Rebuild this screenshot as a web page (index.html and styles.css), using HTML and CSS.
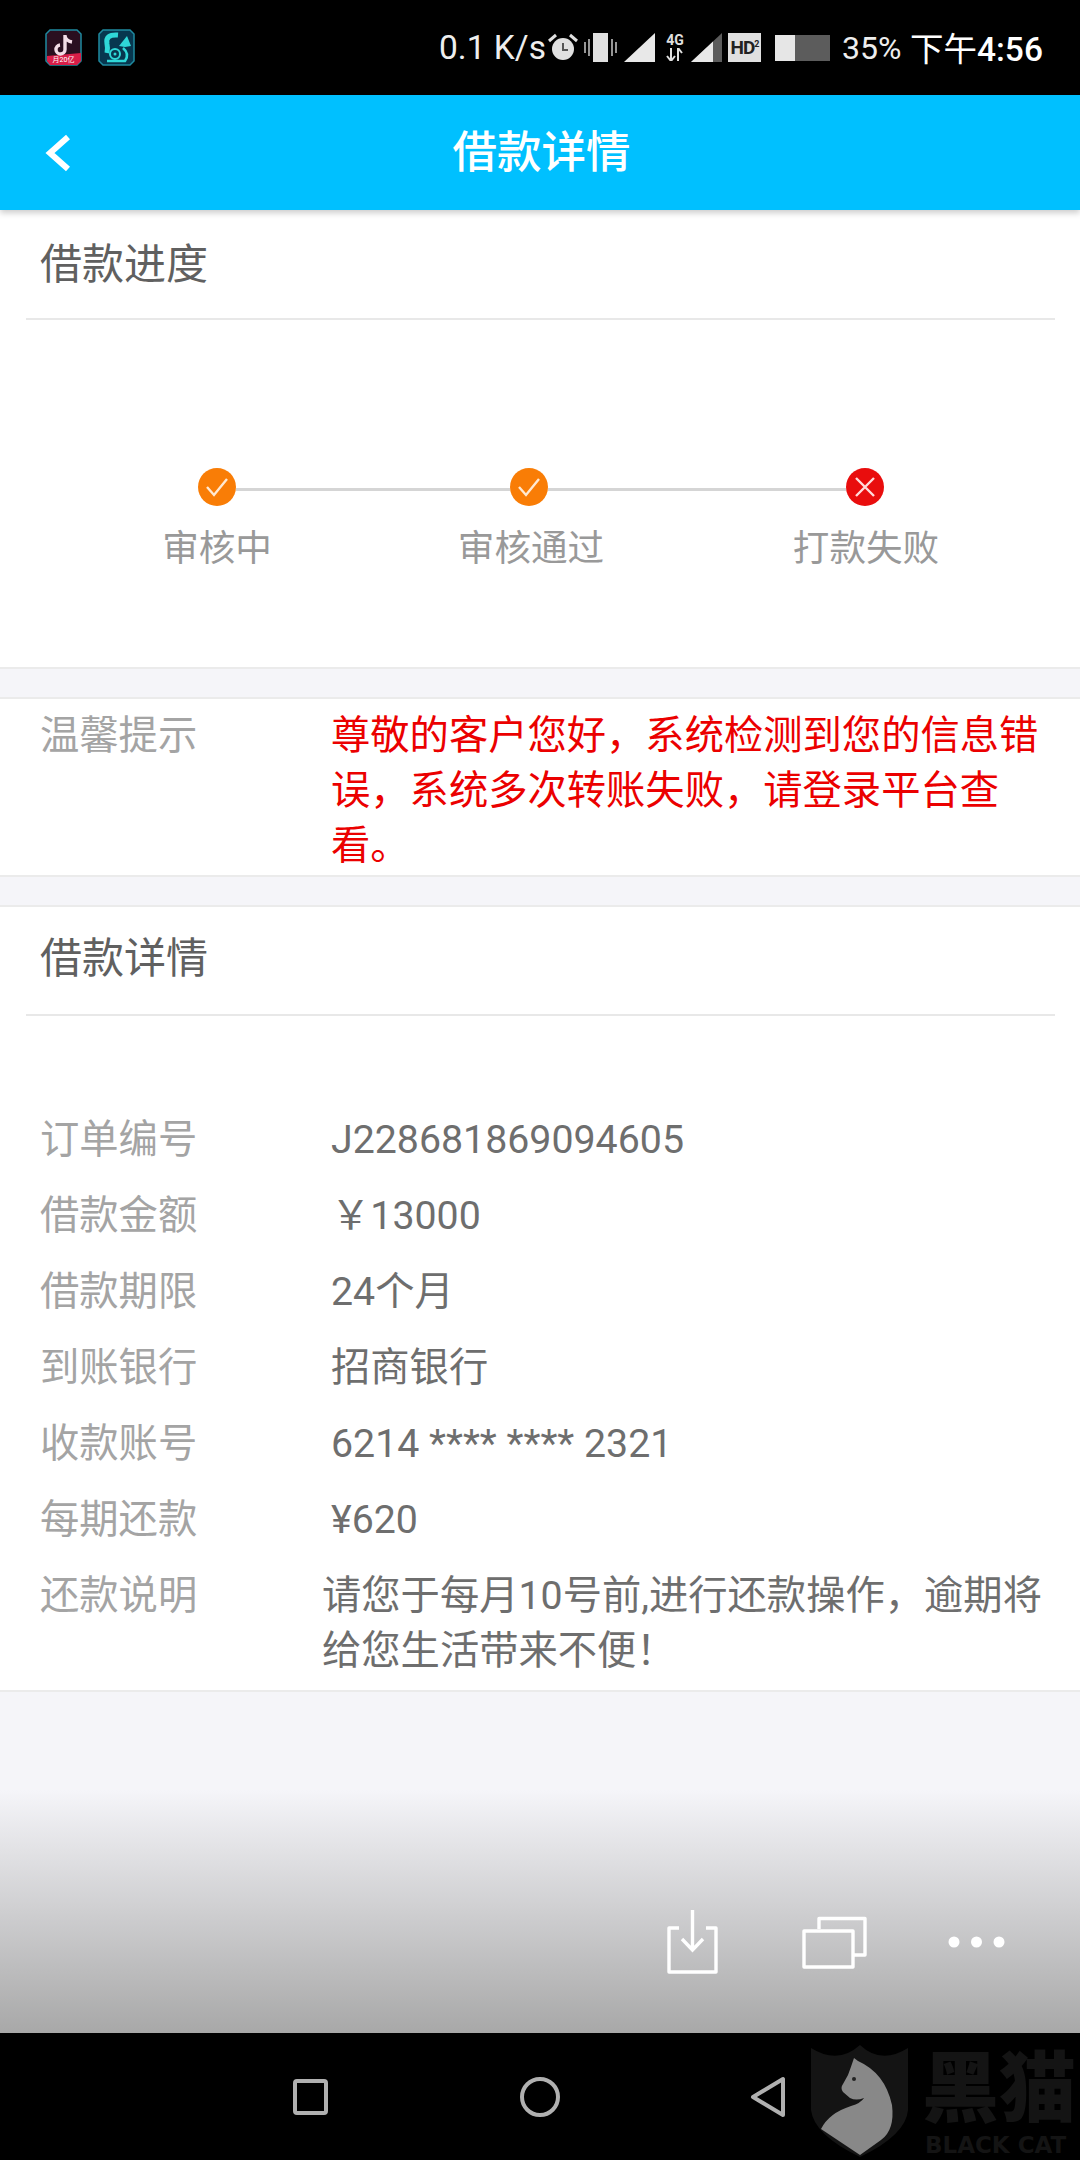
FILE: index.html
```html
<!DOCTYPE html>
<html lang="zh-CN">

<head>
  <meta http-equiv="Content-Type" content="text/html; charset=UTF-8">
  <title>借款详情</title>
  <link rel="stylesheet" href="styles.css">
</head>

<body>

  <div class="statusbar">
    <svg class="app-icon" viewBox="0 0 37 37">
      <path d="M5 1H32L36 5V32L32 36H5L1 32V5Z" fill="#2a0f20" stroke="#1f8aa0" stroke-width="1.5" />
      <path d="M2 27L36 24V32L32 36H5L2 32Z" fill="#d81e48" />
      <path d="M20 6V20.5A4.5 4.5 0 1 1 15 16M20 7Q21 12 27 13" fill="none" stroke="#f2dce6" stroke-width="3.4" />
      <text x="18.5" y="33" class="app-tiny">月20亿</text>
    </svg>
    <svg class="app-icon app-second" viewBox="0 0 37 37">
      <path d="M5 1H32L36 5V32L32 36H5L1 32V5Z" fill="#07374f" stroke="#1f8aa0" stroke-width="1.5" />
      <path d="M20 6Q7 5 9 15Q10 19 9 24" fill="none" stroke="#2fd8d8" stroke-width="5" />
      <path d="M21 17L25 12L29 7L33 17L27 18Z" fill="#2fd8d8" />
      <path d="M25 19Q32 25 27 32H9" fill="none" stroke="#2fd8d8" stroke-width="2.5" />
      <circle cx="17" cy="25" r="5" fill="none" stroke="#2fd8d8" stroke-width="2" />
      <circle cx="17" cy="25" r="1.5" fill="#2fd8d8" />
    </svg>

    <span class="net-speed">0.1 K/s</span>

    <svg class="st-icon st-alarm" viewBox="0 0 30 29">
      <circle cx="15" cy="16" r="11" fill="#e0e0e0" />
      <path d="M15 10V17H20" fill="none" stroke="#555" stroke-width="2" />
      <path d="M1 8L8 2M29 8L22 2" stroke="#e0e0e0" stroke-width="3" />
    </svg>
    <svg class="st-icon st-vibrate" viewBox="0 0 33 29">
      <rect x="9" y="0" width="15" height="29" fill="#e0e0e0" />
      <path d="M1 9V20M5 6V23M28 6V23M32 9V20" stroke="#bbb" stroke-width="1.6" />
    </svg>
    <svg class="st-icon st-signal" viewBox="0 0 31 29">
      <path d="M0 29L31 0V29Z" fill="#e8e8e8" />
    </svg>
    <div class="st-4g">
      <span>4G</span>
      <svg viewBox="0 0 18 13">
        <path d="M5 0V13M1 8L5 13L9 8M12 13V0M12 0L16 5" fill="none" stroke="#e0e0e0" stroke-width="2" />
      </svg>
    </div>
    <svg class="st-icon st-signal-two" viewBox="0 0 31 29">
      <path d="M0 29L31 0V29Z" fill="#5c5c5c" />
      <path d="M0 29L22 8.5V29Z" fill="#e8e8e8" />
    </svg>
    <span class="st-hd">HD<sup>2</sup></span>
    <div class="st-battery">
      <div class="st-battery-fill"></div>
    </div>
    <span class="st-percent">35%</span>
    <span class="st-clock">下午<b>4:56</b></span>
  </div>

  <div class="topbar">
    <svg class="back" viewBox="0 0 26 38">
      <path d="M23 3L5 19L23 35" fill="none" stroke="#fff" stroke-width="6" />
    </svg>
    <h1>借款详情</h1>
  </div>

  <div class="main">

    <div class="card card-progress">
      <div class="card-title title-progress">借款进度</div>
      <div class="track">
        <svg class="dot" viewBox="0 0 38 38">
          <circle cx="19" cy="19" r="19" fill="#f97d06" />
          <path d="M9 19L16 27L29 11" fill="none" stroke="#ffe9d2" stroke-width="2.4" />
        </svg>
        <div class="track-line line-short"></div>
        <svg class="dot" viewBox="0 0 38 38">
          <circle cx="19" cy="19" r="19" fill="#f97d06" />
          <path d="M9 19L16 27L29 11" fill="none" stroke="#ffe9d2" stroke-width="2.4" />
        </svg>
        <div class="track-line line-long"></div>
        <svg class="dot" viewBox="0 0 38 38">
          <circle cx="19" cy="19" r="19" fill="#e90d0d" />
          <path d="M10 10L28 28M28 10L10 28" fill="none" stroke="#ffdcdc" stroke-width="2.4" />
        </svg>
      </div>
      <div class="steps">
        <span class="step">审核中</span>
        <span class="step step-two">审核通过</span>
        <span class="step step-three">打款失败</span>
      </div>
    </div>

    <div class="card card-tip">
      <div class="row">
        <span class="label">温馨提示</span>
        <span class="tip-text">尊敬的客户您好，系统检测到您的信息错误，系统多次转账失败，请登录平台查看。</span>
      </div>
    </div>

    <div class="card card-detail">
      <div class="card-title">借款详情</div>
      <div class="rows">
        <div class="row"><span class="label">订单编号</span><span class="value">J228681869094605</span></div>
        <div class="row"><span class="label">借款金额</span><span class="value">￥13000</span></div>
        <div class="row"><span class="label">借款期限</span><span class="value">24个月</span></div>
        <div class="row"><span class="label">到账银行</span><span class="value">招商银行</span></div>
        <div class="row"><span class="label">收款账号</span><span class="value">6214 **** **** 2321</span></div>
        <div class="row"><span class="label">每期还款</span><span class="value">¥620</span></div>
        <div class="row"><span class="label">还款说明</span><span class="value value-note">请您于每月10号前,进行还款操作，逾期将给您生活带来不便！</span></div>
      </div>
    </div>

    <div class="spacer"></div>

    <div class="toolbar">
      <svg class="tool-save" viewBox="0 0 51 64">
        <path d="M12 18H2V62H49V18H39" fill="none" stroke="#fff" stroke-width="3.4" stroke-linejoin="round" />
        <path d="M25.500 0V39M15 29L25.500 40L36 29" fill="none" stroke="#fff" stroke-width="3.4" />
      </svg>
      <svg class="tool-windows" viewBox="0 0 65 64">
        <path d="M17 19V8.500H63V45H51" fill="none" stroke="#fff" stroke-width="3.4" stroke-linejoin="round" />
        <rect x="2" y="21" width="49" height="36" fill="none" stroke="#fff" stroke-width="3.4" stroke-linejoin="round" />
      </svg>
      <svg class="tool-more" viewBox="0 0 58 64">
        <circle cx="6" cy="32" r="5.500" fill="#fff" />
        <circle cx="28.500" cy="32" r="5.500" fill="#fff" />
        <circle cx="51" cy="32" r="5.500" fill="#fff" />
      </svg>
    </div>

  </div>

  <div class="navbar">
    <svg class="nav-square" viewBox="0 0 35 36">
      <rect x="2" y="2" width="31" height="32" rx="2" fill="none" stroke="#b0b0b0" stroke-width="4" />
    </svg>
    <svg class="nav-circle" viewBox="0 0 40 40">
      <circle cx="20" cy="20" r="18" fill="none" stroke="#b0b0b0" stroke-width="4" />
    </svg>
    <svg class="nav-back" viewBox="0 0 35 42">
      <path d="M33 3V39L3 21Z" fill="none" stroke="#b0b0b0" stroke-width="4" stroke-linejoin="round" />
    </svg>

    <div class="watermark">
      <svg class="wm-shield" viewBox="0 0 97 112">
        <path d="M0 3Q27 20 49 0Q70 20 97 3V65Q95 90 49 112Q3 90 0 65Z" fill="#141414" />
        <path d="M43 13L47 16Q74 28 81 60Q84 85 70 95L49 110L10 84Q18 68 40 61Q50 58 53 53Q45 56 39 53L32 47Q29 43 32 39L37 30Q40 22 43 13Z" fill="#888" />
        <circle cx="43" cy="34" r="2" fill="#222" />
      </svg>
      <div class="wm-text">
        <span class="wm-cn">黑猫</span>
        <span class="wm-en">BLACK CAT</span>
      </div>
    </div>
  </div>

</body>

</html>
```

FILE: styles.css
```css
* {
  box-sizing: border-box;
}

html,
body {
  margin: 0;
  padding: 0;
}

body {
  width: 1080px;
  height: 2160px;
  display: flex;
  flex-direction: column;
  overflow: hidden;
  background: #f5f5f9;
  font-family: Roboto, "Noto Sans CJK SC", sans-serif;
}

/* status bar */
.statusbar {
  height: 95px;
  background: #000;
  color: #eee;
  display: flex;
  align-items: center;
  padding-left: 45px;
  flex: none;
}

.app-icon {
  width: 37px;
  height: 37px;
}

.app-second {
  margin-left: 16px;
}

.app-tiny {
  font-size: 7px;
  fill: #fff;
  text-anchor: middle;
}

.net-speed {
  margin-left: 304px;
  font-size: 33.500px;
  width: 109px;
  white-space: nowrap;
}

.st-icon {
  height: 29px;
  flex: none;
}

.st-alarm {
  width: 30px;
}

.st-vibrate {
  width: 33px;
  margin-left: 6px;
}

.st-signal {
  width: 31px;
  margin-left: 7px;
}

.st-4g {
  width: 18px;
  height: 29px;
  margin-left: 11px;
  display: flex;
  flex-direction: column;
  align-items: center;
  font-size: 14px;
  line-height: 15px;
  font-weight: 700;
  color: #e0e0e0;
}

.st-4g svg {
  width: 18px;
  height: 13px;
}

.st-signal-two {
  width: 31px;
  margin-left: 7px;
}

.st-hd {
  width: 33px;
  height: 29px;
  margin-left: 6px;
  background: #e0e0e0;
  color: #222;
  font-size: 19px;
  line-height: 29px;
  font-weight: 700;
  text-align: center;
  letter-spacing: -1px;
}

.st-hd sup {
  font-size: 9px;
  line-height: 0;
}

.st-battery {
  width: 55px;
  height: 26px;
  margin-left: 14px;
  background: #5c5c5c;
}

.st-battery-fill {
  width: 20px;
  height: 26px;
  background: #e6e6e6;
}

.st-percent {
  margin-left: 12px;
  font-size: 32px;
  width: 68px;
}

.st-clock {
  font-size: 33.500px;
  color: #fff;
  white-space: nowrap;
  margin-bottom: 3px;
}

.st-clock b {
  font-weight: 500;
}

/* header */
.topbar {
  height: 115px;
  background: #00c0ff;
  display: flex;
  align-items: center;
  justify-content: center;
  position: relative;
  flex: none;
  box-shadow: 0 3px 6px rgba(0, 0, 0, 0.2);
  z-index: 2;
}

.topbar h1 {
  margin: 0 0 8px 3px;
  font-size: 44.500px;
  font-weight: 500;
  color: #fff;
}

.back {
  position: absolute;
  left: 45px;
  top: 39px;
  width: 26px;
  height: 38px;
}

/* cards */
.main {
  flex: 1;
  display: flex;
  flex-direction: column;
}

.card {
  background: #fff;
  border-bottom: 2px solid #ebebeb;
}

.card-progress {
  height: 459px;
}

.card-tip {
  margin-top: 28px;
  border-top: 2px solid #ebebeb;
  padding: 10px 0 1px;
}

.card-detail {
  margin-top: 28px;
  border-top: 2px solid #ebebeb;
}

.card-title {
  height: 110px;
  line-height: 104px;
  margin: 0 25px 0 26px;
  padding-left: 14px;
  font-size: 42px;
  color: #606060;
  border-bottom: 2px solid #e8e8e8;
}

.title-progress {
  line-height: 110px;
}

.card-detail .card-title {
  height: 109px;
}

/* progress */
.track {
  display: flex;
  align-items: center;
  padding: 148px 0 0 198px;
}

.dot {
  width: 38px;
  height: 38px;
  flex: none;
}

.track-line {
  height: 3px;
  margin-top: 5px;
  background: #d5d5d5;
}

.line-short {
  width: 274px;
}

.line-long {
  width: 298px;
}

.steps {
  display: flex;
  margin-top: 18px;
  padding-left: 137px;
  line-height: 50px;
}

.step {
  width: 160px;
  font-size: 36.600px;
  color: #999;
  text-align: center;
}

.step-two {
  margin-left: 154px;
}

.step-three {
  margin-left: 175px;
}

/* rows */
.rows {
  padding: 97px 0 11px;
}

.rows .row {
  margin-bottom: 21px;
}

.rows .row:last-child {
  margin-bottom: 0;
}

.row {
  display: flex;
  padding: 0 20px 0 40px;
  font-size: 39.300px;
  line-height: 55px;
}

.label {
  width: 291px;
  flex: none;
  color: #a4a4a4;
}

.value {
  color: #6e6e6e;
}

.value-note {
  margin-left: -9px;
}

.tip-text {
  color: #eb0000;
}

/* bottom toolbar */
.spacer {
  flex: 1;
}

.toolbar {
  height: 243px;
  flex: none;
  display: flex;
  align-items: flex-start;
  padding: 120px 0 0 667px;
  background: linear-gradient(#f5f5f9, #a8a8a8);
}

.toolbar svg {
  height: 64px;
  flex: none;
}

.tool-save {
  width: 51px;
}

.tool-windows {
  width: 65px;
  margin-left: 84px;
}

.tool-more {
  width: 58px;
  margin-left: 81px;
}

/* navigation */
.navbar {
  height: 127px;
  flex: none;
  background: #000;
  display: flex;
  align-items: center;
  padding-left: 293px;
  position: relative;
  overflow: hidden;
}

.nav-square {
  width: 35px;
  height: 36px;
}

.nav-circle {
  width: 40px;
  height: 40px;
  margin-left: 192px;
}

.nav-back {
  width: 35px;
  height: 42px;
  margin-left: 190px;
}

.watermark {
  position: absolute;
  left: 811px;
  top: 12px;
  display: flex;
  color: #141414;
}

.wm-shield {
  width: 97px;
  height: 112px;
  flex: none;
}

.wm-text {
  margin-left: 14px;
  display: flex;
  flex-direction: column;
  white-space: nowrap;
}

.wm-cn {
  font-size: 77px;
  line-height: 78px;
  font-weight: 900;
  margin-top: 6px;
}

.wm-en {
  font-family: "DejaVu Sans", sans-serif;
  font-size: 23px;
  line-height: 18px;
  font-weight: 700;
  margin: 7px 0 0 3px;
}
```
